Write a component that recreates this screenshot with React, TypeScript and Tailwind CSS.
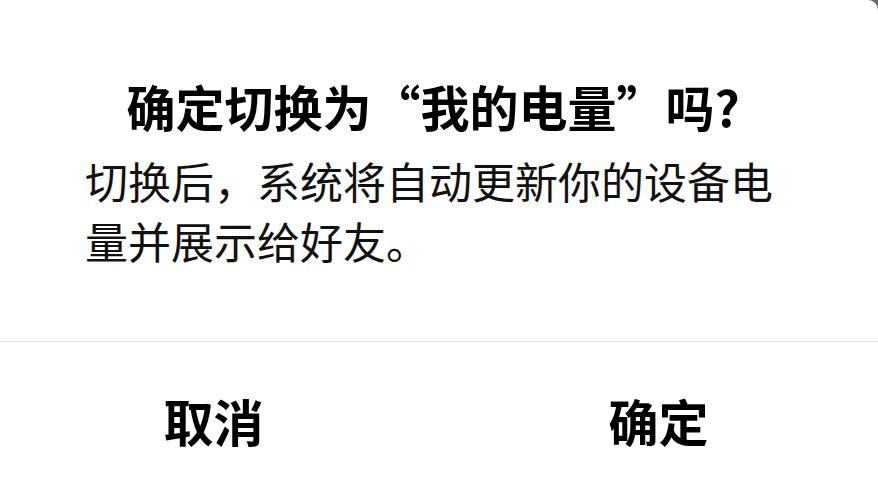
import React from "react";

export default function App() {
  const font = { fontFamily: '"Noto Sans CJK SC", "Noto Sans", sans-serif' };
  return (
    <div className="w-[878px] h-[490px] bg-[#6a6a6a] overflow-hidden" style={font}>
      <div className="w-full h-full bg-white rounded-tr-[10px] flex flex-col">
        <div className="h-[341px] flex flex-col pt-[76px] px-[85px]">
          <div className="text-center text-[49px] leading-[60px] font-semibold text-black pr-[12px]">
            确定切换为“我的电量”吗?
          </div>
          <div className="mt-[14px] text-[43px] leading-[60px] text-[#111]">
            切换后，系统将自动更新你的设备电量并展示给好友。
          </div>
        </div>
        <div className="h-px bg-[#e8e8e8]" />
        <div className="flex-1 grid grid-cols-2 pt-[8px]">
          <div className="flex items-center justify-center text-[50px] font-semibold text-black pr-[12px]">取消</div>
          <div className="flex items-center justify-center text-[50px] font-semibold text-black">确定</div>
        </div>
      </div>
    </div>
  );
}
